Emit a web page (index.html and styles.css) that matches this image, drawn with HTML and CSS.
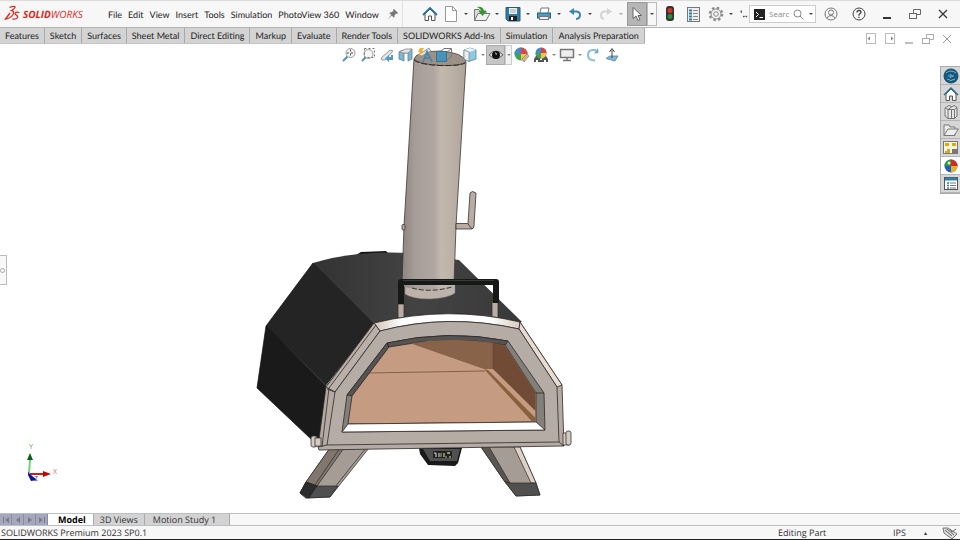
FILE: index.html
```html
<!DOCTYPE html>
<html lang="en">
<head>
    <meta charset="UTF-8">
    <meta name="viewport" content="width=device-width, initial-scale=1.0">
    <title>SOLIDWORKS Premium 2023</title>
    <link rel="stylesheet" href="styles.css">
</head>
<body>
    <header class="titlebar">
        <div class="logo">
            <svg width="17" height="18" viewBox="0 0 17 18" fill="none" stroke="#da291c" stroke-width="1.3">
                <path d="M5.500 2.500 Q9.500 .8 11 1.800 Q11.500 3.200 7.500 5.500 Q10.500 6 9 9.500 Q6.500 13.500 1.500 14 L6 8"/>
                <path d="M15.500 7.500 Q12 6.500 11 8 Q10.500 9 13 10.500 Q14.500 12 12.500 13.500 Q11 14.300 8.500 14"/>
            </svg>
            <span class="brand"><b>SOLID</b>WORKS</span>
        </div>
        <nav class="menu">
            <button>File</button>
            <button>Edit</button>
            <button>View</button>
            <button>Insert</button>
            <button>Tools</button>
            <button>Simulation</button>
            <button>PhotoView 360</button>
            <button>Window</button>
        </nav>
        <button class="pin" aria-label="Pin menu">
            <svg width="12" height="12" viewBox="0 0 12 12"><path d="M7 1 L11 5 L10 6 L9 5.500 L7.500 7.500 L7.500 9 L6.500 9.500 L4.800 7.500 L1 11 L4.200 6.800 L2.500 5 L3 4.200 L4.800 4.200 L6.500 2.500 L6 1.800 Z" fill="#777"/></svg>
        </button>
        <div class="quick">
            <button class="tool" aria-label="Home">
                <svg width="16" height="16" viewBox="0 0 16 16"><path d="M3 8 V14.500 H6.500 V10 H9.500 V14.500 H13 V8 L8 3 Z" fill="#fff" stroke="#555"/><path d="M1 9 L8 2 L15 9" fill="none" stroke="#2b7091" stroke-width="1.800"/></svg>
            </button>
            <button class="tool" aria-label="New">
                <svg width="16" height="16" viewBox="0 0 16 16"><path d="M2.500 .5 H9.500 L13.500 4.500 V15.500 H2.500 Z M9.500 .5 V4.500 H13.500" fill="#fff" stroke="#999"/></svg>
            </button>
            <button class="caret" aria-label="New options"></button>
            <button class="tool" aria-label="Open">
                <svg width="18" height="16" viewBox="0 0 18 16"><path d="M1.500 14.500 V3.500 H6 L7 5 H13 V14.500 Z" fill="#ddd" stroke="#777"/><path d="M1.500 14.500 L5 7.500 H17 L13 14.500 Z" fill="#f1f1f1" stroke="#777"/><path d="M4 1 Q10 0 11 5 H13.500 L9.500 10 L5.500 5 H8 Q8 3 4 1" fill="#2f9a2c"/></svg>
            </button>
            <button class="caret" aria-label="Open options"></button>
            <button class="tool" aria-label="Save">
                <svg width="16" height="16" viewBox="0 0 16 16"><path d="M1 1.500 H15 V15 H3 L1 13 Z" fill="#357ca2" stroke="#255e7c"/><rect x="4" y="2" width="8" height="6" fill="#eee"/><path d="M5 4 H11 M5 6 H11" stroke="#aaa"/><rect x="4" y="10" width="8" height="5" fill="#222"/><rect x="6" y="11" width="2" height="3" fill="#fff"/></svg>
            </button>
            <button class="caret" aria-label="Save options"></button>
            <button class="tool" aria-label="Print">
                <svg width="16" height="16" viewBox="0 0 16 16"><path d="M4 7 L5 2 H13 L12 7" fill="#fff" stroke="#777"/><rect x="1.500" y="7" width="13" height="5" fill="#4b9bc3" stroke="#28627f"/><rect x="3.500" y="10.500" width="9" height="3" fill="#eee" stroke="#777"/></svg>
            </button>
            <button class="caret" aria-label="Print options"></button>
            <button class="tool" aria-label="Undo">
                <svg width="14" height="14" viewBox="0 0 14 14"><path d="M3 4.500 H8 Q12 4.500 12 8 Q12 11.500 8 12" fill="none" stroke="#3a87b0" stroke-width="2"/><path d="M6 1 V8 L1 4.500 Z" fill="#3a87b0"/></svg>
            </button>
            <button class="caret" aria-label="Undo list"></button>
            <button class="tool" aria-label="Redo">
                <svg width="14" height="14" viewBox="0 0 14 14"><path d="M11 4.500 H6 Q2 4.500 2 8 Q2 11.500 5 12" fill="none" stroke="#d4d4d4" stroke-width="2"/><path d="M8 1 V8 L13 4.500 Z" fill="#d4d4d4"/></svg>
            </button>
            <button class="caret faded" aria-label="Redo list"></button>
            <button class="tool select-tool" aria-label="Select">
                <svg width="12" height="16" viewBox="0 0 12 16"><path d="M2 1.500 V12.500 L5 10 L7 14.500 L9 13.500 L7 9.500 H10.500 Z" fill="#fff" stroke="#666"/></svg>
            </button>
            <button class="caret select-caret" aria-label="Select options"></button>
            <button class="tool wide" aria-label="Rebuild">
                <svg width="8" height="16" viewBox="0 0 8 16"><rect width="8" height="15" rx="3" fill="#333"/><circle cx="4" cy="4.500" r="2.500" fill="#d8322a"/><circle cx="4" cy="10.500" r="2.500" fill="#2c8d37"/></svg>
            </button>
            <button class="tool wide" aria-label="File properties">
                <svg width="13" height="15" viewBox="0 0 13 15"><rect x=".5" y=".5" width="12" height="14" fill="#eee" stroke="#777"/><path d="M2 3.500 H5 M2 6.500 H5 M2 9.500 H5 M2 12.500 H5" stroke="#2f7fa8" stroke-width="2"/><path d="M6 3.500 H11 M6 6.500 H11 M6 9.500 H11 M6 12.500 H11" stroke="#888"/></svg>
            </button>
            <button class="tool" aria-label="Options">
                <svg width="16" height="16" viewBox="0 0 16 16" fill="none" stroke="#888"><circle cx="8" cy="8" r="6.300" stroke-width="2" stroke-dasharray="2.500 2.450"/><circle cx="8" cy="8" r="5" fill="#f4f4f4"/><circle cx="8" cy="8" r="2.300"/></svg>
            </button>
            <button class="caret" aria-label="Options list"></button>
            <span class="overflow">'..</span>
        </div>
        <div class="search">
            <svg width="11" height="11" viewBox="0 0 11 11"><rect width="11" height="11" fill="#222"/><path d="M2 3 L4.500 5.500 L2 8 M5.500 8.500 H9" fill="none" stroke="#fff"/></svg>
            <input type="text" placeholder="Search" aria-label="Search commands">
            <svg width="11" height="11" viewBox="0 0 11 11" fill="none" stroke="#888"><circle cx="4.500" cy="4.500" r="3.500"/><path d="M7 7 L10.500 10.500"/></svg>
            <button class="caret" aria-label="Search options"></button>
        </div>
        <div class="window-buttons">
            <button aria-label="User">
                <svg width="14" height="14" viewBox="0 0 14 14" fill="none" stroke="#777"><circle cx="7" cy="7" r="6"/><circle cx="7" cy="5.500" r="2.500"/><path d="M3 11.500 Q4 8.500 7 8.500 Q10 8.500 11 11.500"/></svg>
            </button>
            <button aria-label="Help">
                <svg width="14" height="14" viewBox="0 0 14 14" fill="none" stroke="#444"><circle cx="7" cy="7" r="6"/><path d="M5 5.500 Q5 3.500 7 3.500 Q9 3.500 9 5.300 Q9 6.300 7 7.500 V8.800 M7 9.800 V11" stroke-width="1.300"/></svg>
            </button>
            <button aria-label="Minimize">
                <svg width="12" height="12" viewBox="0 0 12 12"><path d="M2 10 H10" stroke="#333" stroke-width="2"/></svg>
            </button>
            <button aria-label="Restore">
                <svg width="12" height="12" viewBox="0 0 12 12" fill="none" stroke="#666"><path d="M4.500 5 V1.500 H11.500 V6.500 H8"/><rect x=".5" y="5.500" width="7" height="5"/></svg>
            </button>
            <button aria-label="Close">
                <svg width="12" height="12" viewBox="0 0 12 12"><path d="M2 2 L10 10 M10 2 L2 10" stroke="#333" stroke-width="1.200"/></svg>
            </button>
        </div>
    </header>

    <div class="ribbon">
        <div class="tabs">
            <button>Features</button>
            <button>Sketch</button>
            <button>Surfaces</button>
            <button>Sheet Metal</button>
            <button>Direct Editing</button>
            <button>Markup</button>
            <button>Evaluate</button>
            <button>Render Tools</button>
            <button>SOLIDWORKS Add-Ins</button>
            <button>Simulation</button>
            <button>Analysis Preparation</button>
        </div>
        <div class="doc-buttons">
            <button aria-label="Previous pane"><svg width="12" height="12" viewBox="0 0 12 12"><rect x="1.500" y=".5" width="9" height="10" fill="none" stroke="#bbb"/><path d="M5 3.500 V7.500 L2.500 5.500 Z" fill="#888"/></svg></button>
            <button aria-label="Next pane"><svg width="12" height="12" viewBox="0 0 12 12"><rect x="1.500" y=".5" width="9" height="10" fill="none" stroke="#bbb"/><path d="M7 3.500 V7.500 L9.500 5.500 Z" fill="#888"/></svg></button>
            <button aria-label="Minimize document"><svg width="12" height="12" viewBox="0 0 12 12"><path d="M2 10 H10" stroke="#aaa" stroke-width="1.500"/></svg></button>
            <button aria-label="Restore document"><svg width="12" height="12" viewBox="0 0 12 12" fill="none" stroke="#aaa"><path d="M4.500 5 V1.500 H11.500 V6.500 H8"/><rect x=".5" y="5.500" width="7" height="5"/></svg></button>
            <button aria-label="Close document"><svg width="12" height="12" viewBox="0 0 12 12"><path d="M2 2 L10 10 M10 2 L2 10" stroke="#999"/></svg></button>
        </div>
    </div>

    <main class="viewport">
        <svg class="model" viewBox="0 45 960 468" role="img" aria-label="Pizza oven model">
            <defs>
                <linearGradient id="pipe" x1="0" x2="1"><stop offset="0" stop-color="#8f8580"/><stop offset=".2" stop-color="#a79d98"/><stop offset=".5" stop-color="#b0a7a1"/><stop offset=".62" stop-color="#c4b9af"/><stop offset="1" stop-color="#afa59b"/></linearGradient>
                <linearGradient id="roof" x1="0" x2="1"><stop offset="0" stop-color="#333"/><stop offset=".5" stop-color="#434343"/><stop offset="1" stop-color="#393939"/></linearGradient>
                <linearGradient id="rim" x1="0" x2="1"><stop offset="0" stop-color="#d2c6bc"/><stop offset=".2" stop-color="#fff"/><stop offset=".8" stop-color="#fff"/><stop offset="1" stop-color="#d8cbc1"/></linearGradient>
            </defs>
            <!-- legs -->
            <g stroke="#282625" stroke-width=".7" stroke-linejoin="round">
                <path d="M330 448 H369 L338 487 L330 497 L306 498 L300 493 L306 482 Z" fill="#a69c96"/>
                <path d="M330 448 L306 482 L317 486 L344 448 Z" fill="#81776f"/>
                <path d="M340 448 L315 485 M366 448 L335 487" fill="none"/>
                <path d="M306 482 L317 486 H338 L330 497 L306 498 L300 493 Z" fill="#505050"/>
                <path d="M306 482 L317 486 L309 498 L300 493 Z" fill="#2b2b2b"/>
                <path d="M481 447 H520 L536 483 L540 495 L516 496 L505 482 Z" fill="#a69c96"/>
                <path d="M481 447 L489 447 L510 483 L505 482 Z" fill="#5b5653"/>
                <path d="M514 447 L520 447 L536 483 L531 483 Z" fill="#ded1c8"/>
                <path d="M505 482 L510 483 H536 L540 495 L516 496 Z" fill="#505050"/>
            </g>
            <!-- control box -->
            <path d="M419 448 H462 L458 463 L455 466 L428 465 L420 454 Z" fill="#191919"/>
            <path d="M423 449 H460 L457 461 H430 Z" fill="#505050"/>
            <rect x="433" y="451" width="19" height="7" fill="#222"/>
            <path d="M434 453 H436 V457 M439 453 V457 M444 453 V457 M447 453 H450 M449 457 H451" stroke="#ddd" fill="none"/>
            <path d="M441 453 V457 M446 456 V458 M449 452 V454" stroke="#b4bc30"/>
            <!-- oven body -->
            <path d="M356 255 L361 252 L386 251 L390 255 Z" fill="#151515"/>
            <path d="M313 263 Q356 250 410 253 L459 260 L522 322 L374 324 Z" fill="url(#roof)"/>
            <path d="M313 263 L374 324 L326 385 L266 326 Z" fill="#242424" stroke="#0c0c0c" stroke-width=".7"/>
            <path d="M266 326 L326 386 L320 443 L312 440 L257 388 Z" fill="#1a1a1a" stroke="#0c0c0c" stroke-width=".7"/>
            <!-- chimney -->
            <path d="M405 286 V294 Q412 299 430 299 Q449 298 455 293 V284 Z" fill="#bdb3aa" stroke="#777" stroke-width=".5"/>
            <path d="M414 59 L404 226 L402 286 Q430 295 454 284 L456 226 L466 62 Z" fill="url(#pipe)"/>
            <path d="M414 59 L404 226 L402 284 M466 62 L456 226 L454 284" fill="none" stroke="#3c3835" stroke-width=".8"/>
            <path d="M412 288 Q430 293 452 287" fill="none" stroke="#333" stroke-dasharray="5 2"/>
            <path d="M414 59 Q416 51 441 51 Q464 53 466 62 Q462 66 440 65.500 Q418 64 414 59 Z" fill="#9d9087" stroke="#4a4440" stroke-width=".8"/>
            <path d="M414 60 Q419 64.500 440 65.500 Q460 66 465 63" fill="none" stroke="#2b2826" stroke-dasharray="6 2"/>
            <g fill="#b8ada5" stroke="#36312e" stroke-width=".8">
                <path d="M456 223.500 H468 L470 193 Q472 190 476 193 L474 226 Q474 229 471 229 H456 Z"/>
                <path d="M468 224 L472 229" />
                <rect x="402" y="224.500" width="3" height="5.500" rx="1"/>
                <path d="M398 304 H404 V321 H398 Z M492 302 H498 V320 H492 Z"/>
            </g>
            <path d="M401 304 V282 H496 V303" fill="none" stroke="#171917" stroke-width="6" stroke-linejoin="round"/>
            <path d="M403 280.500 H494" stroke="#40443e" stroke-width=".8"/>
            <!-- front frame -->
            <g stroke="#2e2a28" stroke-width=".8" stroke-linejoin="round">
                <path d="M318 447 L326 387 L374 323 Q448 305 520 322 L562 385 L564 446 L319 450 Z" fill="#b5aaa3"/>
                <path d="M374 323 Q448 305 520 322 L519 329 Q448 313 380 331 Z" fill="url(#rim)"/>
                <path d="M326 387 L374 323 L380 331 L335 392 Z" fill="#bbb0a9"/>
                <path d="M520 322 L562 385 L557 387 L519 329 Z" fill="#e8dbd1"/>
                <path d="M335 392 L380 331 Q448 313 519 329 L557 387 L559 442 L327 445 Z" fill="#b5aca6"/>
                <path d="M318 447 L327 445 M559 442 L564 446 M322 447 L329 388 L376 325 M335 392 L327 389" fill="none"/>
                <path d="M342 432 L347 395 L387 343 Q448 329 508 341 L544 393 L545 430 Z" fill="#83807c"/>
                <path d="M387 343 Q448 329 508 341 L505 345 Q448 335 389 347 Z M387 343 L389 347 L352 396 L347 395 Z" fill="#555452"/>
                <path d="M348 424 L352 396 L389 347 Q448 335 505 345 L536 393 V422 Z" fill="#c59c82"/>
                <path d="M348 424 L536 422 L545 430 L342 432 Z" fill="#fff"/>
                <path d="M536 393 H544" fill="none"/>
            </g>
            <!-- oven interior -->
            <path d="M411 343.500 Q448 337 493 343 V369 H484 Z" fill="#88634a"/>
            <path d="M493 343 L505 345.500 L535.500 393 V411 L493 369 Z" fill="#714b35"/>
            <path d="M484 369 L488 370 L535.500 418 V421.500 L532 421.500 Z" fill="#88603f"/>
            <path d="M367 373 L485 371 M493 343 V369" stroke="#65482f" stroke-width=".7" fill="none"/>
            <!-- hinges -->
            <g fill="#d3cbc3" stroke="#393532" stroke-width=".8">
                <rect x="311" y="436" width="6" height="11" rx="2"/><rect x="315" y="438" width="6" height="8"/>
                <rect x="563" y="433" width="6" height="12"/><rect x="566" y="431" width="5" height="14" rx="2"/>
            </g>
            <!-- axis triad -->
            <path d="M29 473 L30 460" stroke="#70d27a" stroke-width="2"/><path d="M27 460 L30 453 L33 460 Z" fill="#0b6415"/>
            <path d="M30 474 H44" stroke="#df1616" stroke-width="2"/><path d="M43 471 L51 474 L43 477 Z" fill="#b90808"/>
            <path d="M28 472 L31 475 L37 480 L31 481 L28 475 Z" fill="#0b12a0"/>
            <text class="axis axis-y" x="29" y="449">Y</text>
            <text class="axis axis-x" x="53" y="474">X</text>
            <text class="axis axis-z" x="34" y="481">Z</text>
        </svg>

        <div class="view-toolbar">
            <button aria-label="Zoom to fit"><svg width="16" height="16" viewBox="0 0 16 16"><path d="M2 14 L7 9" stroke="#4f93b6" stroke-width="2"/><circle cx="9.500" cy="6" r="4.500" fill="#f7f7f7" stroke="#999"/><path d="M9.500 2.500 V9.500 M6 6 H13" stroke="#444" stroke-dasharray="2 2"/></svg></button>
            <button aria-label="Zoom to area"><svg width="16" height="16" viewBox="0 0 16 16"><path d="M2 14 L6 10" stroke="#4f93b6" stroke-width="2"/><circle cx="8.500" cy="7" r="4.500" fill="#f7f7f7" stroke="#999"/><rect x="4.500" y="1.500" width="10" height="9" fill="none" stroke="#777" stroke-dasharray="2 2"/></svg></button>
            <button aria-label="Previous view"><svg width="16" height="16" viewBox="0 0 16 16"><path d="M2 11 L11 3 L14 4 L6 13 Q2 14 2 11 Z" fill="#e4e4e4" stroke="#999"/><path d="M14 8 V13 H10 V15 L6 11.500 L10 8 V10 H12 V8 Z" fill="#4f9cc4"/></svg></button>
            <button aria-label="Section view"><svg width="16" height="16" viewBox="0 0 16 16"><path d="M1 5 Q3 3 8 3 L14 2 V12 L10 14 V6 H6 V14 L1 12 Z" fill="#7db7d3" stroke="#5c7f90" stroke-width=".8"/><path d="M1 5 L8 2 L14 2 L10 6 H6 Z" fill="#e5e5e5" stroke="#888" stroke-width=".8"/></svg></button>
            <button aria-label="Dynamic annotation views"><svg width="18" height="16" viewBox="0 0 18 16"><path d="M2 8 L13 1 L15 4 L6 9 Z" fill="#ddd" stroke="#888" stroke-width=".8"/><path d="M4 1 H8 L6 4 H8 L2 9 L4 5 H2 Z" fill="#efac3b"/><path d="M7 15 L11 5 L16 15 M9 11 H14" fill="none" stroke="#4b86a5" stroke-width="2"/></svg></button>
            <button class="overlap" aria-label="View orientation"><svg width="18" height="16" viewBox="0 0 18 16"><path d="M5 5 L9 1.500 H16.500 V9.500 L12 13 M12 5 L16 2 M5 5 H12" fill="none" stroke="#777"/><rect x="1.500" y="4.500" width="10" height="10" fill="#4794ba" stroke="#3a7390"/></svg></button>
            <button aria-label="Display style"><svg width="14" height="16" viewBox="0 0 14 16"><path d="M1 3 L7 1 L13 3 V12 L6 14.500 L1 12 Z" fill="#8ec8e3" stroke="#5b8298" stroke-width=".8"/><path d="M1 3 L6 5 L13 3 L7 1 Z" fill="#e9f6fb"/><path d="M1 3 L6 5 V14.500 L1 12 Z" fill="#eee" stroke="#79909b" stroke-width=".8"/></svg></button>
            <span class="hud-caret"></span>
            <button class="pressed" aria-label="Hide or show items"><svg width="16" height="12" viewBox="0 0 16 12"><path d="M1 6 Q8 -2 15 6 Q8 13 1 6" fill="#ddd" stroke="#444" stroke-width=".8"/><circle cx="8" cy="6" r="4" fill="#111"/><path d="M7 3 L9 5 L8 6 Z" fill="#fff"/></svg></button>
            <span class="hud-caret boxed"></span>
            <button aria-label="Edit appearance"><svg width="16" height="16" viewBox="0 0 16 16"><circle cx="7" cy="7" r="6.500" fill="#3ba450"/><path d="M7 7 V.5 A6.500 6.500 0 0 1 13.500 7 Z" fill="#df4343"/><path d="M7 7 V.5 A6.500 6.500 0 0 0 .5 7 Z" fill="#3f8cd0"/><path d="M7 7 H13.500 A6.500 6.500 0 0 1 7 13.500 Z" fill="#efc63f"/><path d="M8 12 L13 7 L15 9 L10 15 Z" fill="#d6b48b" stroke="#777" stroke-width=".6"/></svg></button>
            <button aria-label="Apply scene"><svg width="16" height="16" viewBox="0 0 16 16"><path d="M1 12 L3 9 H13 L15 12 V15 H1 Z" fill="#555"/><path d="M3 14 H5 M7 12 H9 M11 14 H13" stroke="#fff" stroke-width="2"/><circle cx="8" cy="6" r="5.500" fill="#3f8cd0"/><path d="M8 6 V.5 A5.500 5.500 0 0 1 13.500 6 Z" fill="#df4343"/><path d="M8 6 H2.500 A5.500 5.500 0 0 0 8 11.500 Z" fill="#3ba450"/><path d="M8 6 H13.500 A5.500 5.500 0 0 1 8 11.500 Z" fill="#efc63f"/></svg></button>
            <span class="hud-caret"></span>
            <button aria-label="View settings"><svg width="16" height="14" viewBox="0 0 16 14"><rect x="1.500" y="1.500" width="13" height="8" fill="#eee" stroke="#777" stroke-width="1.500"/><path d="M8 9 V12 M4 12.500 H12" stroke="#777" stroke-width="1.500"/></svg></button>
            <span class="hud-caret"></span>
            <button aria-label="Rotate view"><svg width="14" height="16" viewBox="0 0 14 16"><path d="M9 13.500 Q2 13.500 2 8 Q2 3 7 3 H10" fill="none" stroke="#87c0dc" stroke-width="2"/><path d="M8 6.500 L12.500 6 L12 1 Z" fill="#67aaca"/></svg></button>
            <button aria-label="Normal to"><svg width="16" height="16" viewBox="0 0 16 16"><path d="M2 11.500 L6 9 H14 L11 14 Z" fill="#7fb7d4" stroke="#5289a5" stroke-width=".8"/><path d="M8 11 V3 M5.500 5 L8 1.500 L10.500 5" fill="none" stroke="#444"/></svg></button>
        </div>

        <button class="panel-handle" aria-label="Show feature tree"><span></span></button>

        <aside class="task-pane">
            <button aria-label="3DEXPERIENCE"><svg width="16" height="16" viewBox="0 0 16 16"><circle cx="8" cy="8" r="7.500" fill="#175779"/><path d="M3 5 Q8 1 13 5 M5 8 H6 M10 8 H11 M4 11 Q8 14 12 11 M7 6.500 L10 8 L7 9.500 Z" stroke="#76b4d2" fill="none"/></svg></button>
            <button aria-label="Resources"><svg width="16" height="16" viewBox="0 0 16 16"><path d="M3 8 V14.500 H6.500 V10 H9.500 V14.500 H13 V8 L8 3 Z" fill="#fff" stroke="#555"/><path d="M1 9 L8 2 L15 9" fill="none" stroke="#2b7091" stroke-width="1.500"/></svg></button>
            <button aria-label="Design library"><svg width="14" height="16" viewBox="0 0 14 16" fill="#e6e6e6" stroke="#666" stroke-width=".9"><path d="M1 4 L5 1.500 L8 3 L10 1.500 L13 3.500 V12 L10.500 14.500 H4 L1 12 Z"/><path d="M1 4 L4 5.500 V14.500 M4 5.500 L7.500 3 M4 5.500 L7.500 5.500 V14.500 M7.500 5.500 L10.500 5.500 V14.500 M10.500 5.500 L13 3.500"/></svg></button>
            <button aria-label="File explorer"><svg width="16" height="14" viewBox="0 0 16 14" fill="#eee" stroke="#777"><path d="M1 12.500 V2 H6 L7 4 H12 V12.500 Z"/><path d="M1 12.500 L5 6 H15.500 L11 12.500 Z"/></svg></button>
            <button aria-label="View palette"><svg width="15" height="14" viewBox="0 0 15 14"><rect x=".5" y=".5" width="14" height="12" fill="#f7f4dc" stroke="#777"/><path d="M2 2 H6 V5 H2 Z M9 2 H13 V5 H9 Z M4 8 H7 V12 H2 V10 H4 Z" fill="#dca914"/><path d="M9 8 H14 V13 H9 Z" fill="#777"/></svg></button>
            <button class="current" aria-label="Appearances"><svg width="14" height="14" viewBox="0 0 14 14"><circle cx="7" cy="7" r="6.500" fill="#245bc4"/><path d="M7 7 V.5 A6.500 6.500 0 0 1 13.500 7 Z" fill="#dc2525"/><path d="M7 7 V.5 A6.500 6.500 0 0 0 .5 7 Z" fill="#2b9a3a"/><path d="M7 7 H13.500 A6.500 6.500 0 0 1 7 13.500 Z" fill="#e7b51e"/><circle cx="5" cy="4" r="1.500" fill="#d5f0d5"/></svg></button>
            <button aria-label="Custom properties"><svg width="14" height="13" viewBox="0 0 14 13"><rect x=".5" y=".5" width="13" height="12" fill="#fff" stroke="#555"/><path d="M1 2 H13" stroke="#2f7fa8" stroke-width="3"/><path d="M3 6 H5 M3 8.500 H5 M3 11 H5" stroke="#2f7fa8" stroke-width="1.500"/><path d="M6 6 H12 M6 8.500 H12 M6 11 H12" stroke="#777"/></svg></button>
        </aside>
    </main>

    <div class="sheets">
        <div class="sheet-nav">
            <button aria-label="First"><svg width="8" height="8" viewBox="0 0 8 8"><path d="M1 1 H2 V7 H1 Z M7 1 V7 L3 4 Z" fill="#777991"/></svg></button>
            <button aria-label="Previous"><svg width="8" height="8" viewBox="0 0 8 8"><path d="M6 1 V7 L2 4 Z" fill="#777991"/></svg></button>
            <button aria-label="Next"><svg width="8" height="8" viewBox="0 0 8 8"><path d="M2 1 V7 L6 4 Z" fill="#777991"/></svg></button>
            <button aria-label="Last"><svg width="8" height="8" viewBox="0 0 8 8"><path d="M6 1 H7 V7 H6 Z M1 1 V7 L5 4 Z" fill="#777991"/></svg></button>
        </div>
        <button class="sheet active">Model</button>
        <button class="sheet">3D Views</button>
        <button class="sheet last">Motion Study 1</button>
    </div>
    <footer class="status">
        <span>SOLIDWORKS Premium 2023 SP0.1</span>
        <span class="mode">Editing Part</span>
        <span class="units">IPS</span>
        <span class="dot">▴</span>
        <svg width="16" height="12" viewBox="0 0 16 12"><path d="M1 1 L6 1 L15 7 L10 12 L2 6 Z" fill="#ddd" stroke="#777"/><path d="M3 3 L10 9 M5 2 L12 8 M8 2 L10 5 L14 2" fill="none" stroke="#666"/></svg>
    </footer>
</body>
</html>
```
FILE: styles.css
```css
* {
    padding: 0;
    margin: 0;
    box-sizing: border-box;
}
body {
    height: 100vh;
    display: flex;
    flex-direction: column;
    overflow: hidden;
    background: #fff;
    color: #333;
    font-family: "Open Sans", "Noto Sans", sans-serif;
    font-size: 9px;
    line-height: 12px;
    text-rendering: geometricPrecision;
}
button {
    border: none;
    background: none;
    color: inherit;
    font: inherit;
    text-rendering: inherit;
    white-space: nowrap;
}
svg {
    display: block;
    flex: none;
}

/* title bar */
.titlebar {
    display: flex;
    align-items: center;
    height: 28px;
    flex: none;
    background: #f7f7f7;
    border-top: 1px solid #dcdcdc;
    border-bottom: 1px solid #b4b4b4;
}
.logo {
    display: flex;
    align-items: center;
    gap: 2px;
    width: 105px;
    padding-left: 4px;
}
.brand {
    color: #da291c;
    font-size: 10px;
    font-style: italic;
}
.menu {
    display: flex;
    width: 282px;
    padding-top: 1px;
}
.menu,
.tabs {
    color: #222;
    font-family: Lato, "Open Sans", sans-serif;
}
.menu button {
    padding: 0 3px;
}
.pin {
    display: flex;
    align-items: center;
    width: 16px;
    height: 26px;
    border-right: 1px solid #e2e2e2;
}
.quick {
    display: flex;
    align-items: center;
    padding-left: 16px;
}
.tool {
    display: flex;
    align-items: center;
    justify-content: center;
    width: 20px;
    height: 24px;
    margin-left: 1px;
}
.caret {
    display: flex;
    align-items: center;
    justify-content: center;
    width: 10px;
    height: 24px;
}
.caret::after,
.hud-caret::after {
    content: "";
    border: 2px solid transparent;
    border-top-color: #444;
    border-bottom: none;
}
.faded::after {
    border-top-color: #aaa;
}
.select-tool {
    background: #b5b5b5;
    border: 1px solid #999;
}
.select-caret {
    border: 1px solid #bbb;
}
.wide {
    width: 23px;
}
.overflow {
    width: 13px;
    padding-left: 4px;
    font-weight: 700;
}
.search {
    display: flex;
    align-items: center;
    gap: 4px;
    width: 67px;
    height: 18px;
    padding-left: 4px;
    background: #fff;
    border: 1px solid #ccc;
}
.search input {
    width: 20px;
    border: none;
    outline: none;
    font: inherit;
    font-size: 8px;
}
.search .caret {
    height: 16px;
    margin-left: -2px;
}
.search input::placeholder {
    color: #888;
}
.window-buttons {
    display: flex;
    margin-left: auto;
    padding-right: 3px;
}
.window-buttons button {
    display: flex;
    align-items: center;
    justify-content: center;
    width: 28px;
    height: 24px;
}

/* command manager tabs */
.ribbon {
    display: flex;
    justify-content: space-between;
    flex: none;
    height: 17px;
}
.tabs {
    display: flex;
    height: 16px;
    background: #d3d3d3;
    border-bottom: 1px solid #c4c4c4;
}
.tabs button {
    padding: 0 5px;
    border-right: 1px solid #aaa;
}
.doc-buttons {
    display: flex;
    align-items: flex-end;
    gap: 7px;
    padding-right: 7px;
}
.doc-buttons button {
    width: 12px;
    height: 12px;
}

/* graphics area */
.viewport {
    position: relative;
    flex: 1;
    min-height: 0;
}
.model {
    width: 100%;
    height: 100%;
}
.axis {
    font-size: 7px;
}
.axis-x {
    fill: #e66;
}
.axis-y {
    fill: #5a9c5f;
}
.axis-z {
    fill: #44d;
}
.view-toolbar {
    position: absolute;
    top: 0;
    left: 0;
    right: 0;
    display: flex;
    justify-content: center;
    align-items: center;
}
.view-toolbar button {
    display: flex;
    align-items: center;
    justify-content: center;
    width: 19px;
    height: 20px;
}
.view-toolbar .overlap {
    margin-right: 7px;
}
.view-toolbar .pressed {
    background: #c6c6c6;
    border: 1px solid #aaa;
}
.hud-caret {
    display: flex;
    align-items: center;
    justify-content: center;
    width: 7px;
    height: 20px;
}
.hud-caret::after {
    border-top-color: #888;
}
.boxed {
    border: 1px solid #ccc;
    background: #f2f2f2;
}
.panel-handle {
    position: absolute;
    top: 210px;
    left: 0;
    width: 7px;
    height: 30px;
    background: #f8f8f8;
    border: 1px solid #bbb;
    border-left: none;
}
.panel-handle span {
    display: block;
    width: 5px;
    height: 5px;
    border: 1px solid #aaa;
    border-radius: 50%;
}
.task-pane {
    position: absolute;
    top: 21px;
    right: 0;
    width: 20px;
    border: 1px solid #aaa;
    border-right: none;
    background: #d6d6d6;
}
.task-pane button {
    display: flex;
    align-items: center;
    justify-content: center;
    width: 100%;
    height: 18px;
    border-bottom: 1px solid #b5b5b5;
}
.task-pane .current {
    background: #fff;
}

/* bottom tabs and status bar */
.sheets {
    display: flex;
    flex: none;
    height: 13px;
    background: #f7f7f7;
    border-top: 1px solid #b8c0c0;
    border-bottom: 1px solid #b8c0c0;
}
.sheet-nav {
    display: flex;
    background: #a6a7bd;
}
.sheet-nav button {
    display: flex;
    align-items: center;
    justify-content: center;
    width: 12px;
    border-right: 1px solid #8b8ca3;
}
.sheet {
    padding: 0 6px;
    background: #d3d3d3;
    border-right: 1px solid #aaa;
    line-height: 11px;
}
.active {
    padding: 0 7px 0 10px;
    background: #fff;
    color: #000;
    font-weight: 700;
}
.last {
    padding: 0 13px 0 8px;
}
.status {
    display: flex;
    align-items: center;
    flex: none;
    height: 14px;
    padding: 0 2px 0 1px;
    background: #f7f7f7;
    border-bottom: 1px solid #222;
}
.mode {
    margin-left: auto;
    width: 115px;
}
.units {
    width: 31px;
}
.dot {
    width: 18px;
    font-size: 6px;
}
```
